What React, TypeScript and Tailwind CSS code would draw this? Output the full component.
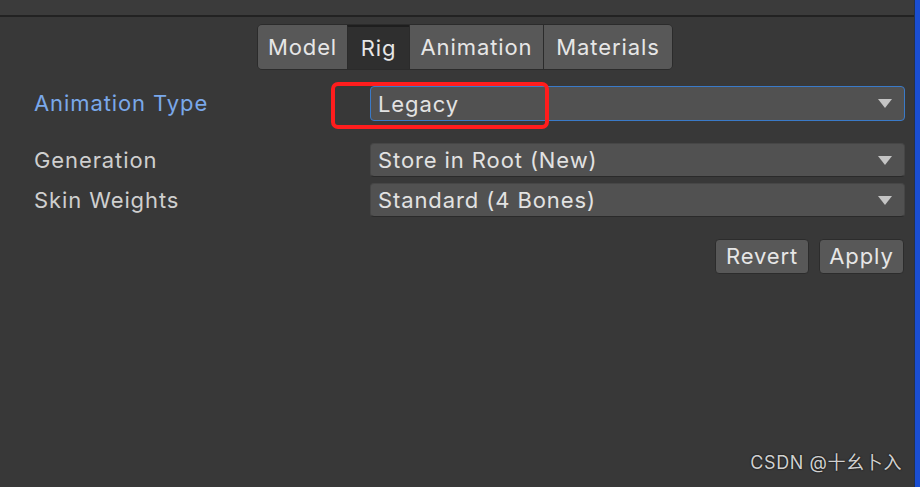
const Arrow = () => (
  <svg width="14" height="9" viewBox="0 0 14 9" className="shrink-0">
    <path d="M0 0 H14 L7 9 Z" fill="#c4c4c4" />
  </svg>
);

function Dropdown({ value, focused }: { value: string; focused?: boolean }) {
  return (
    <div
      className={
        focused
          ? "flex h-[35px] items-center justify-between rounded-[4px] border border-[#3a7ac8] bg-[#515151] pl-[7px] pr-[12px]"
          : "flex h-[34px] items-center justify-between rounded-[4px] border border-[#464646] border-b-[#2a2a2a] bg-[#515151] pl-[7px] pr-[12px]"
      }
    >
      <span className="text-[22px] leading-none tracking-[0.9px] text-[#e2e2e2]">{value}</span>
      <Arrow />
    </div>
  );
}

const TABS = [
  { name: "Model", w: "w-[89px]" },
  { name: "Rig", w: "w-[62px]" },
  { name: "Animation", w: "w-[134px]" },
  { name: "Materials", w: "w-[129px]" },
];

export default function App() {
  return (
    <div
      className="flex h-[487px] w-[920px] overflow-hidden bg-[#383838]"
      style={{ fontFamily: "Inter, 'Noto Sans', 'Noto Sans CJK SC', sans-serif" }}
    >
      <div className="relative flex flex-1 flex-col">
        <div className="h-[15px] bg-[#3b3b3b]" />
        <div className="h-[2px] bg-[#222222]" />

        {/* Tabs */}
        <div className="ml-[257px] mt-[7px] flex h-[46px] w-fit overflow-hidden rounded-[5px] border border-[#2b2b2b]">
          {TABS.map((t, i) => (
            <div
              key={t.name}
              className={
                (t.name === "Rig" ? "bg-[#2f2f2f] border-t-2 border-t-[#1e1e1e] " : "bg-[#585858] ") +
                (i > 0 ? "border-l border-l-[#2b2b2b] " : "") +
                t.w +
                " flex items-center justify-center text-[22px] tracking-[0.9px] text-[#e6e6e6]"
              }
            >
              {t.name}
            </div>
          ))}
        </div>

        {/* Rows */}
        <div className="mt-[16px] flex flex-col pr-[9px] tracking-[0.9px]">
          <div className="flex items-center">
            <span className="w-[370px] shrink-0 pl-[34px] text-[22px] text-[#7aa8ea]">Animation Type</span>
            <div className="relative flex-1">
              <Dropdown value="Legacy" focused />
              <div className="pointer-events-none absolute left-[-39px] top-[-4px] h-[47px] w-[218px] rounded-[7px] border-[4px] border-[#ff1d1d]" />
            </div>
          </div>

          <div className="mt-[22px] flex items-center">
            <span className="w-[370px] shrink-0 pl-[34px] text-[22px] text-[#cfcfcf]">Generation</span>
            <div className="flex-1">
              <Dropdown value="Store in Root (New)" />
            </div>
          </div>

          <div className="mt-[6px] flex items-center">
            <span className="w-[370px] shrink-0 pl-[34px] text-[22px] text-[#cfcfcf]">Skin Weights</span>
            <div className="flex-1">
              <Dropdown value="Standard (4 Bones)" />
            </div>
          </div>

          <div className="mt-[22px] flex justify-end gap-[10px] pr-[1px]">
            <button className="h-[35px] w-[94px] rounded-[4px] border border-[#2c2c2c] bg-[#585858] text-[22px] text-[#e6e6e6]">
              Revert
            </button>
            <button className="h-[35px] w-[85px] rounded-[4px] border border-[#2c2c2c] bg-[#585858] text-[22px] text-[#e6e6e6]">
              Apply
            </button>
          </div>
        </div>

        <div className="absolute bottom-[11px] right-[12px] text-[18px] tracking-[0.6px] text-[#d0d0d0] [text-shadow:0_0_2px_#000]">
          CSDN @十幺卜入
        </div>
      </div>
      <div className="w-[1px] bg-[#24324a]" />
      <div className="w-[5px] bg-[#1a4ed2]" />
    </div>
  );
}
